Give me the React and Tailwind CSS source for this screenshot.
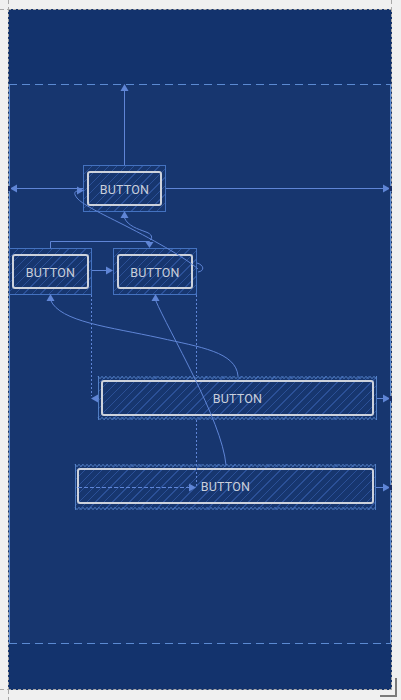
import React from "react";

const LINE = "#5f85d6";

function zigzag(x1, x2, y, amp = 1.2, step = 2) {
  const pts = [];
  let up = true;
  for (let x = x1; x <= x2; x += step) {
    pts.push(`${x},${y + (up ? -amp : amp)}`);
    up = !up;
  }
  return pts.join(" ");
}

function Node({ x, y, w, h, inset, wide }) {
  return (
    <div
      className={`absolute ${wide ? "" : "border border-[#4472c0]"} bg-[repeating-linear-gradient(135deg,#17366f_0px,#17366f_5px,#2b5097_5px,#2b5097_6px)]`}
      style={{ left: x, top: y, width: w, height: h }}
    >
      <div
        className="absolute rounded-[3px] border-2 border-[#cdd2dc] flex items-center justify-center pt-[3px]"
        style={{ left: inset[0], top: inset[1], right: inset[2], bottom: inset[3] }}
      >
        <span className="text-[12.5px] leading-none text-[#c9cfdb] font-['Roboto',sans-serif] tracking-[0.2px]">
          BUTTON
        </span>
      </div>
    </div>
  );
}

export default function App() {
  return (
    <div className="relative w-[401px] h-[700px] bg-[#f0f0f0] overflow-hidden">
      <div className="pt-[9px] pl-[8px]">
        <div className="w-[384px] h-[681px] border border-dashed border-[#a8a8a8] flex flex-col bg-[#13336d]">
          <div className="h-[74px] shrink-0 bg-[#13336d]" />
          <div className="h-[560px] shrink-0 relative bg-[#17366f] border-x border-[#5b8ad2]" />
          <div className="flex-1 bg-[#13336d]" />
        </div>
      </div>

      <svg
        className="absolute inset-0 pointer-events-none"
        width="401"
        height="700"
        viewBox="0 0 401 700"
      >
        <line x1="9" y1="84.5" x2="391" y2="84.5" stroke="#5b8ad2" strokeWidth="1" strokeDasharray="8 5" />
        <line x1="9" y1="643.5" x2="391" y2="643.5" stroke="#5b8ad2" strokeWidth="1" strokeDasharray="8 5" />
        <line x1="0" y1="9.5" x2="8" y2="9.5" stroke="#a8a8a8" strokeDasharray="4 3" />
        <line x1="8.5" y1="0" x2="8.5" y2="9" stroke="#a8a8a8" strokeDasharray="4 3" />
        <line x1="391.5" y1="0" x2="391.5" y2="9" stroke="#a8a8a8" strokeDasharray="4 3" />
        <line x1="0" y1="689.5" x2="8" y2="689.5" stroke="#a8a8a8" strokeDasharray="4 3" />
        <line x1="8.5" y1="690" x2="8.5" y2="700" stroke="#a8a8a8" strokeDasharray="4 3" />
        <path d="M396 678 V696 H380" fill="none" stroke="#7a7a7a" strokeWidth="2" />
      </svg>

      <Node x={83} y={165} w={83} h={47} inset={[3, 5, 3, 5]} />
      <Node x={9} y={248} w={83} h={47} inset={[2, 5, 2, 5]} />
      <Node x={113} y={248} w={84} h={47} inset={[3, 5, 3, 5]} />
      <Node x={98} y={376} w={279} h={44} inset={[3, 4, 3, 4]} wide />
      <Node x={75} y={464} w={301} h={46} inset={[2, 4, 2, 6]} wide />

      <svg
        className="absolute inset-0 pointer-events-none"
        width="401"
        height="700"
        viewBox="0 0 401 700"
      >
        <g stroke="#5f8fd8" strokeWidth="0.8" fill="none">
          <polyline points={zigzag(98, 376, 377.5)} />
          <polyline points={zigzag(98, 376, 418.5)} />
          <line x1="98.5" y1="376" x2="98.5" y2="420" />
          <line x1="376.5" y1="376" x2="376.5" y2="420" />
          <polyline points={zigzag(75, 375, 465.5)} />
          <polyline points={zigzag(75, 375, 508.5)} />
          <line x1="75.5" y1="464" x2="75.5" y2="510" />
          <line x1="375.5" y1="464" x2="375.5" y2="510" />
        </g>

        <g stroke={LINE} strokeWidth="1" fill="none">
          <line x1="124.5" y1="165" x2="124.5" y2="90" />
          <line x1="16" y1="188.5" x2="83" y2="188.5" />
          <line x1="166" y1="188.5" x2="385" y2="188.5" />
          <line x1="92" y1="270.5" x2="108" y2="270.5" />
          <path d="M50.5 248 V241.5 H149.5 V244" />
          <path d="M198 269 C186 258 150 238 118 222 C98 212 82 204 77 198 C73 193 75 191 78 191" />
          <path d="M197 263 C204 265 205 271 198 272" />
          <path d="M124.5 218 C128 226 138 229 146 232 C152 234 153 238 150 240" />
          <line x1="91.5" y1="295" x2="91.5" y2="396" strokeDasharray="2 2" />
          <line x1="196.5" y1="295" x2="196.5" y2="376" strokeDasharray="2 2" />
          <line x1="196.5" y1="420" x2="196.5" y2="486" strokeDasharray="2 2" />
          <line x1="97" y1="398.5" x2="99" y2="398.5" />
          <line x1="377" y1="398.5" x2="385" y2="398.5" />
          <line x1="78" y1="487.5" x2="190" y2="487.5" strokeDasharray="4 2" />
          <line x1="376" y1="487.5" x2="385" y2="487.5" />
          <path d="M238 376 C236 352 200 347 160 338 C110 327 60 322 50.5 300" />
          <path d="M226 465 C222 420 168 330 155.5 300" />
        </g>

        <g fill={LINE}>
          <polygon points="124.5,84 120.5,91 128.5,91" />
          <polygon points="10,188.5 17,184.5 17,192.5" />
          <polygon points="390,188.5 383,184.5 383,192.5" />
          <polygon points="113,270.5 106,266.5 106,274.5" />
          <polygon points="149.5,248 145.5,242 153.5,242" />
          <polygon points="124.5,211 120.5,218 128.5,218" />
          <polygon points="84,190.5 77,186.5 77,194.5" />
          <polygon points="91,398.5 98,394.5 98,402.5" />
          <polygon points="390,398.5 383,394.5 383,402.5" />
          <polygon points="196,487.5 189,483.5 189,491.5" />
          <polygon points="390,487.5 383,483.5 383,491.5" />
          <polygon points="50.5,294 46.5,301 54.5,301" />
          <polygon points="155.5,294 151.5,301 159.5,301" />
        </g>

        <g fill="#1b2f66">
          <rect x="8" y="186" width="3" height="5" />
          <rect x="389" y="186" width="3" height="5" />
          <rect x="389" y="396" width="3" height="5" />
          <rect x="389" y="485" width="3" height="5" />
        </g>
      </svg>
    </div>
  );
}
